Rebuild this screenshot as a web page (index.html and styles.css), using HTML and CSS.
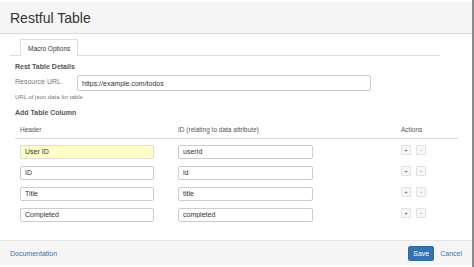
FILE: index.html
```html
<!DOCTYPE html>
<html lang="en">
<head>
    <meta charset="UTF-8">
    <title>Restful Table</title>
    <link rel="stylesheet" href="styles.css">
</head>
<body>
<div class="dialog">
    <div class="dialog-header">
        <h1>Restful Table</h1>
    </div>

    <div class="dialog-body">
        <ul class="tabs">
            <li class="tab active">Macro Options</li>
        </ul>

        <div class="tab-pane">
            <h3>Rest Table Details</h3>
            <div class="field">
                <label>Resource URL</label>
                <input type="text" class="text url" value="https://example.com/todos">
            </div>
            <p class="hint">URL of json data for table</p>

            <h3>Add Table Column</h3>
            <table class="columns">
                <thead>
                    <tr>
                        <th class="col-header">Header</th>
                        <th class="col-id">ID (relating to data attribute)</th>
                        <th class="col-actions">Actions</th>
                    </tr>
                </thead>
                <tbody>
                    <tr>
                        <td><input type="text" class="text focus" value="User ID"></td>
                        <td><input type="text" class="text" value="userId"></td>
                        <td><button class="mini">+</button><button class="mini">-</button></td>
                    </tr>
                    <tr>
                        <td><input type="text" class="text" value="ID"></td>
                        <td><input type="text" class="text" value="id"></td>
                        <td><button class="mini">+</button><button class="mini">-</button></td>
                    </tr>
                    <tr>
                        <td><input type="text" class="text" value="Title"></td>
                        <td><input type="text" class="text" value="title"></td>
                        <td><button class="mini">+</button><button class="mini">-</button></td>
                    </tr>
                    <tr>
                        <td><input type="text" class="text" value="Completed"></td>
                        <td><input type="text" class="text" value="completed"></td>
                        <td><button class="mini">+</button><button class="mini">-</button></td>
                    </tr>
                </tbody>
            </table>
        </div>
    </div>

    <div class="dialog-footer">
        <a href="#" class="doc-link">Documentation</a>
        <div class="footer-actions">
            <button class="save">Save</button>
            <a href="#" class="cancel">Cancel</a>
        </div>
    </div>
</div>
</body>
</html>
```

FILE: styles.css
```css
html, body {
    margin: 0;
    padding: 0;
    height: 100%;
}
body {
    font-family: "Liberation Sans", Arial, sans-serif;
    background: #8a8a8a;
    color: #333;
}
.dialog {
    width: 472px;
    height: 267px;
    background: #fff;
    display: flex;
    flex-direction: column;
    box-sizing: border-box;
    padding-top: 2px;
}
.dialog-header {
    background: #f5f5f5;
    border-bottom: 1px solid #d9d9d9;
    height: 31px;
    display: flex;
    align-items: center;
    padding-left: 10px;
}
.dialog-header h1 {
    margin: 0;
    font-size: 14px;
    font-weight: normal;
    color: #333;
}
.dialog-body {
    flex: 1;
    padding: 5px 32px 0 10px;
}
.tabs {
    list-style: none;
    margin: 0;
    padding: 0 0 0 10px;
    border-bottom: 1px solid #ddd;
    display: flex;
}
.tab {
    font-size: 6.5px;
    padding: 5px 7px 4px;
    border: 1px solid #ddd;
    border-bottom: none;
    margin-bottom: -1px;
    background: #fff;
    color: #333;
}
.tab-pane {
    padding: 0 0 0 5px;
}
h3 {
    font-size: 7px;
    font-weight: bold;
    color: #555;
    margin: 7px 0 5px;
}
.field {
    display: flex;
    align-items: center;
}
.field label {
    font-size: 7px;
    color: #777;
    width: 62px;
    margin-bottom: 4px;
}
input.text {
    font-family: "Liberation Sans", Arial, sans-serif;
    font-size: 7px;
    color: #333;
    border: 1px solid #ccc;
    border-radius: 2px;
    background: #fff;
    box-sizing: border-box;
    height: 14px;
    padding: 0 4px;
    outline: none;
}
input.url {
    width: 294px;
    height: 16px;
}
input.focus {
    background: #ffffc8;
    border-color: #ddd;
}
.hint {
    font-size: 6px;
    color: #777;
    margin: 3px 0 9px;
}
.columns {
    border-collapse: collapse;
    width: 443px;
}
.columns th {
    font-size: 6.5px;
    font-weight: normal;
    color: #555;
    text-align: left;
    padding: 5px 5px 5px;
    border-bottom: 1px solid #ddd;
}
.columns td {
    padding: 0 5px;
    height: 21px;
}
.columns td:first-child input {
    width: 134px;
}
.columns td:nth-child(2) input {
    width: 135px;
}
.col-header { width: 148px; }
.col-id { width: 213px; }
.mini {
    width: 10px;
    height: 10px;
    padding: 0;
    margin-right: 5px;
    border: 1px solid #e2e2e2;
    border-radius: 1px;
    background: #f7f7f7;
    font-size: 6px;
    line-height: 8px;
    color: #555;
    vertical-align: middle;
}
.dialog-footer {
    background: #f5f5f5;
    border-top: 1px solid #e5e5e5;
    height: 24px;
    display: flex;
    align-items: center;
    justify-content: space-between;
    padding: 0 10px 0 10px;
    margin-bottom: 2px;
}
.doc-link, .cancel {
    font-size: 7px;
    color: #3b73af;
    text-decoration: none;
}
.footer-actions {
    display: flex;
    align-items: center;
    gap: 6px;
}
.save {
    font-family: "Liberation Sans", Arial, sans-serif;
    font-size: 7px;
    color: #fff;
    background: #3572b0;
    border: 1px solid #2a67a5;
    border-radius: 2px;
    height: 15px;
    padding: 0 4px;
}
```
